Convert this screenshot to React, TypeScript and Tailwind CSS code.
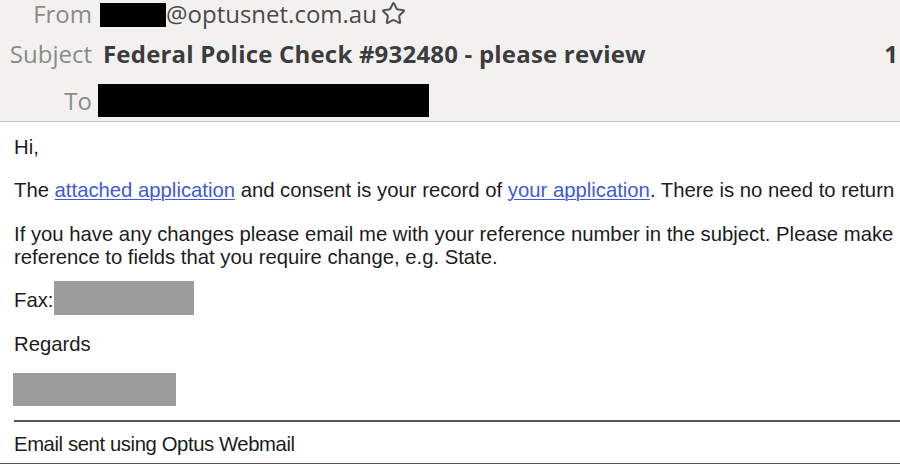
import { Star } from "lucide-react";

const link = "text-[#3f5ad8] underline decoration-1 underline-offset-2";

export default function App() {
  return (
    <div className="w-[900px] h-[464px] overflow-hidden bg-white">
      {/* message header */}
      <div className="bg-[#f2f1f0] border-b border-[#c4c2bf] font-['Open_Sans',sans-serif] text-[24px] leading-none">
        <div className="flex items-center h-[27px]">
          <div className="w-[92px] text-right text-[#8a8a8a]">From</div>
          <div className="ml-[8px] self-end w-[66px] h-[24px] bg-black" />
          <div className="text-[#4a4a4a]">@optusnet.com.au</div>
          <Star className="ml-[4px] text-[#555]" size={25} strokeWidth={2} />
        </div>
        <div className="flex items-center h-[53px]">
          <div className="w-[92px] text-right text-[#8a8a8a]">Subject</div>
          <div className="ml-[11px] font-bold text-[#3c3c3c] flex-1 whitespace-nowrap tracking-[0.2px]">
            Federal Police Check #932480 - please review
          </div>
          <div className="font-bold text-[#3c3c3c] mr-[2px]">1</div>
        </div>
        <div className="flex items-center h-[41px]">
          <div className="w-[92px] text-right text-[#8a8a8a]">To</div>
          <div className="ml-[6px] w-[331px] h-[33px] bg-black" />
        </div>
      </div>

      {/* message body */}
      <div className="px-[14px] pt-[14px] font-['Liberation_Sans',Arial,sans-serif] text-[20.3px] leading-[23px] text-[#1c1c1c]">
        <p>Hi,</p>
        <p className="mt-[20px] whitespace-nowrap">
          The <span className={link}>attached application</span> and consent is your record of{" "}
          <span className={link}>your application</span>. There is no need to return
        </p>
        <p className="mt-[21px] whitespace-nowrap">
          If you have any changes please email me with your reference number in the subject. Please make
          <br />
          reference to fields that you require change, e.g. State.
        </p>
        <div className="mt-[12px] flex items-end">
          <span className="mb-[3px]">Fax:</span>
          <span className="ml-[1px] inline-block w-[140px] h-[34px] bg-[#9c9c9c]" />
        </div>
        <p className="mt-[18px]">Regards</p>
        <div className="mt-[17px] w-[163px] h-[33px] bg-[#9c9c9c] ml-[-1px]" />
        <div className="mt-[14px] mr-[-14px] h-[2px] bg-[#555]" />
        <p className="mt-[11px] tracking-[-0.4px]">Email sent using Optus Webmail</p>
        <div className="mt-[7px] mx-[-14px] h-[2px] bg-[#555]" />
      </div>
    </div>
  );
}
